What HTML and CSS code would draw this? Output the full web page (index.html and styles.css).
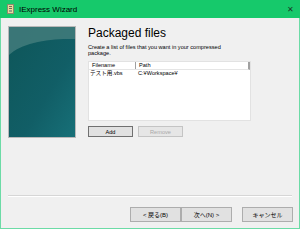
FILE: index.html
```html
<!DOCTYPE html>
<html lang="ja">
<head>
    <meta charset="UTF-8" />
    <title>IExpress Wizard</title>
    <link rel="stylesheet" href="styles.css">
</head>
<body>

<div class="window">
    <div class="titlebar">
        <svg class="app-icon" width="7" height="10" viewBox="0 0 7 10">
            <rect x="0.5" y="0.5" width="6" height="9" fill="#e9dc9a" stroke="#8a8a70" stroke-width="1"/>
            <rect x="2" y="2" width="3" height="1" fill="#6d6d5a"/>
            <rect x="2" y="4" width="3" height="1" fill="#6d6d5a"/>
            <rect x="2" y="6" width="3" height="2" fill="#9a9a88"/>
        </svg>
        <span class="title">IExpress Wizard</span>
        <span class="close">&#x2715;</span>
    </div>

    <div class="main">
        <div class="side">
            <svg width="66" height="110" viewBox="0 0 66 110" preserveAspectRatio="none">
                <defs>
                    <linearGradient id="bg" x1="0" y1="0" x2="1" y2="1">
                        <stop offset="0" stop-color="#0e5659"/>
                        <stop offset="0.6" stop-color="#115e66"/>
                        <stop offset="1" stop-color="#177078"/>
                    </linearGradient>
                </defs>
                <rect width="66" height="110" fill="url(#bg)"/>
                <path d="M0 0 H66 V12 C40 11 12 16 0 28 Z" fill="#3f7a7a" opacity="0.9"/>
            </svg>
        </div>

        <div class="content">
            <h1>Packaged files</h1>
            <p class="desc">Create a list of files that you want in your compressed package.</p>

            <div class="list">
                <div class="list-head">
                    <div class="col-name">Filename</div>
                    <div class="col-path">Path</div>
                </div>
                <div class="list-row">
                    <div class="col-name">テスト用.vbs</div>
                    <div class="col-path">C:¥Workspace¥</div>
                </div>
            </div>

            <div class="list-buttons">
                <button class="btn small focus">Add</button>
                <button class="btn small" disabled>Remove</button>
            </div>
        </div>
    </div>

    <div class="footer">
        <div class="separator"></div>
        <div class="nav">
            <button class="btn wide">&lt; 戻る(B)</button>
            <button class="btn wide">次へ(N) &gt;</button>
            <button class="btn wide cancel">キャンセル</button>
        </div>
    </div>
</div>

</body>
</html>
```

FILE: styles.css
```css
body {
    margin: 0;
    background-color: #f0f0f0;
    font-family: 'Liberation Sans', 'Noto Sans CJK JP', sans-serif;
    color: #000;
}

.window {
    width: 300px;
    height: 229px;
    box-sizing: border-box;
    border: 1px solid #6cdba6;
    border-top: none;
    background-color: #f0f0f0;
    display: flex;
    flex-direction: column;
}

.titlebar {
    height: 18px;
    background-color: #16c96b;
    display: flex;
    align-items: center;
    margin: 0 -1px;
    padding: 0 0 0 7px;
}

.app-icon {
    display: block;
}

.title {
    font-size: 8px;
    margin-left: 5px;
    color: #000;
}

.close {
    margin-left: auto;
    width: 20px;
    text-align: center;
    font-size: 8px;
    color: #1a3a28;
}

.main {
    display: flex;
    padding: 8px 0 0 7px;
}

.side {
    border: 1px solid #b9b9b9;
    width: 66px;
    height: 110px;
}

.side svg {
    display: block;
}

.content {
    margin-left: 12px;
    width: 163px;
}

h1 {
    font-size: 12px;
    font-weight: normal;
    margin: 0;
    line-height: 14px;
    color: #000;
}

.desc {
    font-size: 5.6px;
    line-height: 6px;
    margin: 4px 0 0 0;
    width: 150px;
}

.list {
    margin-top: 5px;
    height: 60px;
    box-sizing: border-box;
    background-color: #fff;
    border: 1px solid #e2e2e2;
    font-size: 5.6px;
}

.list-head {
    display: flex;
    height: 7px;
    line-height: 7px;
    border-bottom: 1px solid #e5e5e5;
    border-right: 2px solid #a0a0a0;
}

.list-head .col-name {
    border-right: 1px solid #a0a0a0;
}

.col-name {
    width: 43px;
    padding-left: 3px;
}

.col-path {
    padding-left: 3px;
}

.list-row {
    display: flex;
    line-height: 7px;
}

.list-row .col-name {
    padding-left: 1px;
    width: 45px;
}

.list-buttons {
    display: flex;
    gap: 5px;
    margin-top: 5px;
}

.btn {
    font-family: 'Liberation Sans', 'Noto Sans CJK JP', sans-serif;
    background-color: #e1e1e1;
    border: 1px solid #adadad;
    color: #000;
    padding: 0;
    margin: 0;
    font-size: 5.6px;
}

.btn.small {
    width: 45px;
    height: 11px;
}

.btn.focus {
    border-color: #707070;
}

.btn:disabled {
    color: #a8a8a8;
    background-color: #e6e6e6;
    border-color: #c4c4c4;
}

.footer {
    margin-top: auto;
    padding-bottom: 6px;
}

.separator {
    margin: 0 7px 0 7px;
    border-top: 1px solid #d6d6d6;
    border-bottom: 1px solid #fff;
}

.nav {
    display: flex;
    justify-content: flex-end;
    margin-top: 10px;
    padding-right: 6px;
}

.btn.wide {
    width: 51px;
    height: 15px;
    font-size: 6px;
}

.btn.cancel {
    margin-left: 10px;
}
```
